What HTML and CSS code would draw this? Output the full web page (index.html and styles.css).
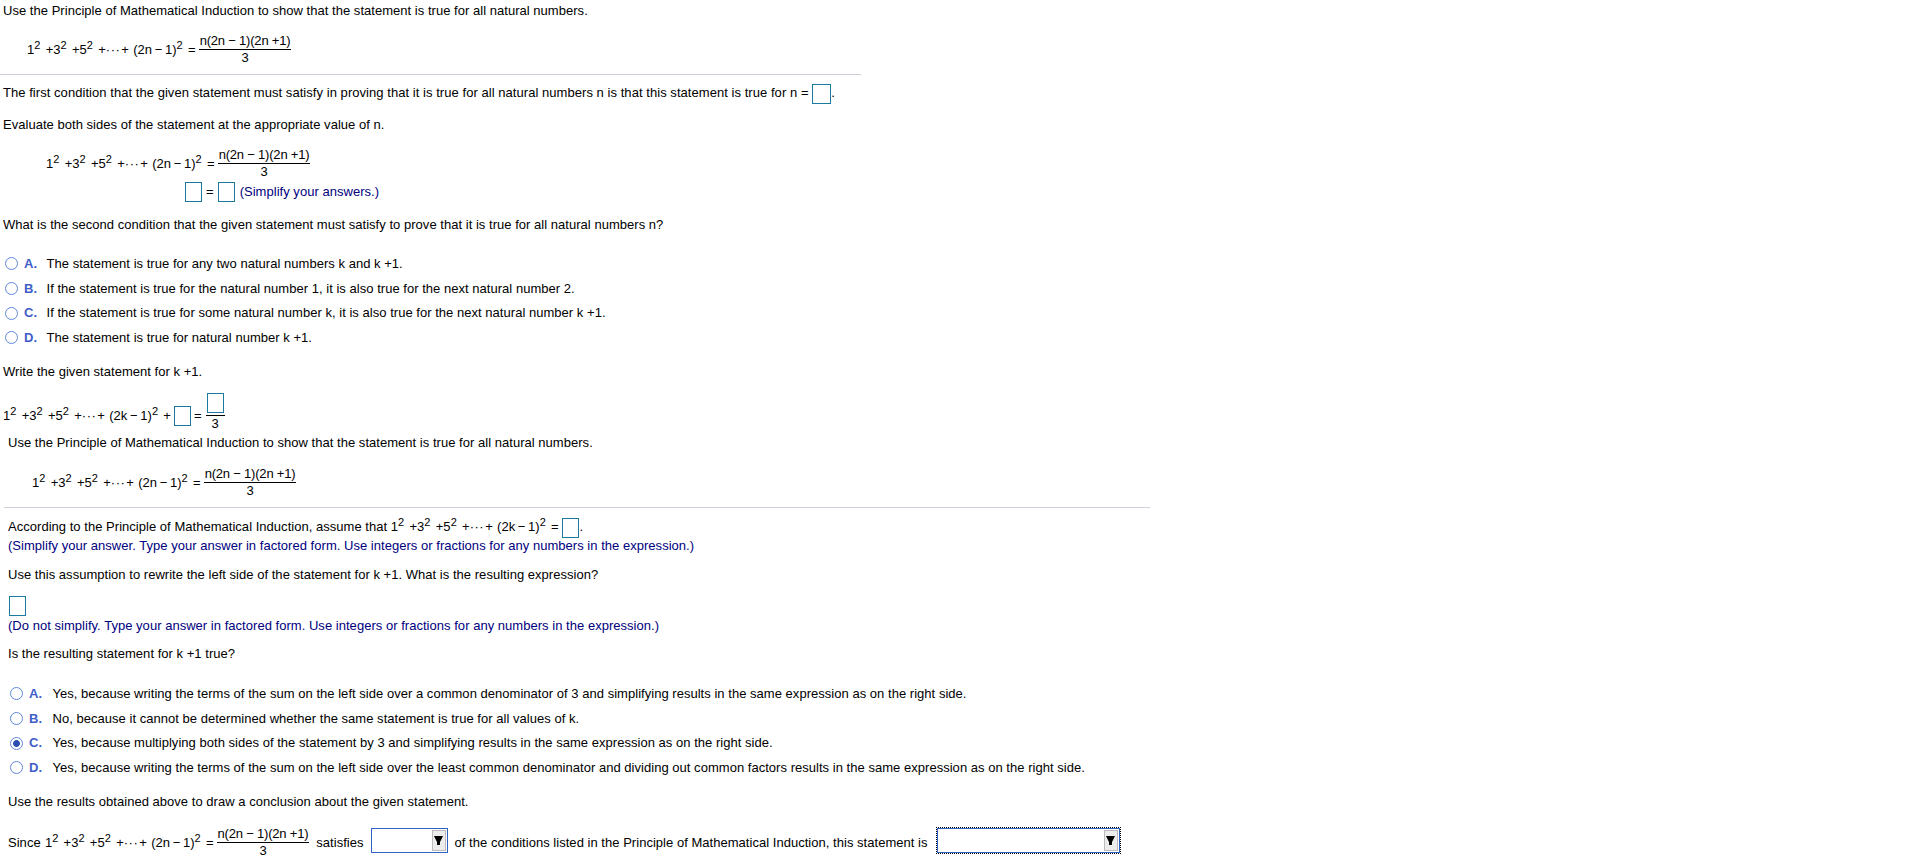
FILE: index.html
```html
<!DOCTYPE html>
<html lang="en">
<head>
    <meta charset="UTF-8">
    <title>Principle of Mathematical Induction</title>
    <link rel="stylesheet" href="styles.css">
</head>
<body>

    <!-- first question -->
    <section class="part part-first">
        <p class="line">Use the Principle of Mathematical Induction to show that the statement is true for all natural numbers.</p>

        <div class="formula indent-first">
            <span class="math">1<sup>2</sup> +3<sup>2</sup> +5<sup>2</sup> +<span class="dots">···</span>+ (2n&thinsp;−&thinsp;1)<sup>2</sup> =</span>
            <span class="frac"><span class="num">n(2n − 1)(2n +1)</span><span class="den">3</span></span>
        </div>
        <hr class="rule rule-first">

        <p class="line line-first-cond">The first condition that the given statement must satisfy in proving that it is true for all natural numbers n is that this statement is true for n = <span class="box box-wide"></span>.</p>
        <p class="line line-eval">Evaluate both sides of the statement at the appropriate value of n.</p>

        <div class="formula indent-eval">
            <span class="math">1<sup>2</sup> +3<sup>2</sup> +5<sup>2</sup> +<span class="dots">···</span>+ (2n&thinsp;−&thinsp;1)<sup>2</sup> =</span>
            <span class="frac"><span class="num">n(2n − 1)(2n +1)</span><span class="den">3</span></span>
        </div>
        <div class="answer-row">
            <span class="box"></span><span>=</span><span class="box"></span><span class="hint">(Simplify your answers.)</span>
        </div>

        <p class="line line-second">What is the second condition that the given statement must satisfy to prove that it is true for all natural numbers n?</p>

        <ul class="choices choices-first">
            <li><span class="radio"></span><b>A.</b><span>The statement is true for any two natural numbers k and k +1.</span></li>
            <li><span class="radio"></span><b>B.</b><span>If the statement is true for the natural number 1, it is also true for the next natural number 2.</span></li>
            <li><span class="radio"></span><b>C.</b><span>If the statement is true for some natural number k, it is also true for the next natural number k +1.</span></li>
            <li><span class="radio"></span><b>D.</b><span>The statement is true for natural number k +1.</span></li>
        </ul>

        <p class="line line-write">Write the given statement for k +1.</p>

        <div class="formula formula-k">
            <span class="math">1<sup>2</sup> +3<sup>2</sup> +5<sup>2</sup> +<span class="dots">···</span>+ (2k&thinsp;−&thinsp;1)<sup>2</sup> +</span>
            <span class="box"></span><span>=</span>
            <span class="frac frac-box"><span class="num"><span class="box"></span></span><span class="den">3</span></span>
        </div>
    </section>

    <!-- second question -->
    <section class="part part-second">
        <p class="line">Use the Principle of Mathematical Induction to show that the statement is true for all natural numbers.</p>

        <div class="formula indent-second">
            <span class="math">1<sup>2</sup> +3<sup>2</sup> +5<sup>2</sup> +<span class="dots">···</span>+ (2n&thinsp;−&thinsp;1)<sup>2</sup> =</span>
            <span class="frac"><span class="num">n(2n − 1)(2n +1)</span><span class="den">3</span></span>
        </div>
        <hr class="rule rule-second">

        <p class="line line-assume">According to the Principle of Mathematical Induction, assume that <span class="math">1<sup>2</sup> +3<sup>2</sup> +5<sup>2</sup> +<span class="dots">···</span>+ (2k&thinsp;−&thinsp;1)<sup>2</sup> =</span> <span class="box"></span>.</p>
        <p class="line line-hint hint">(Simplify your answer. Type your answer in factored form. Use integers or fractions for any numbers in the expression.)</p>

        <p class="line line-rewrite">Use this assumption to rewrite the left side of the statement for k +1. What is the resulting expression?</p>
        <div class="box-row"><span class="box"></span></div>
        <p class="line hint">(Do not simplify. Type your answer in factored form. Use integers or fractions for any numbers in the expression.)</p>

        <p class="line line-true">Is the resulting statement for k +1 true?</p>

        <ul class="choices choices-second">
            <li><span class="radio"></span><b>A.</b><span>Yes, because writing the terms of the sum on the left side over a common denominator of 3 and simplifying results in the same expression as on the right side.</span></li>
            <li><span class="radio"></span><b>B.</b><span>No, because it cannot be determined whether the same statement is true for all values of k.</span></li>
            <li><span class="radio checked"></span><b>C.</b><span>Yes, because multiplying both sides of the statement by 3 and simplifying results in the same expression as on the right side.</span></li>
            <li><span class="radio"></span><b>D.</b><span>Yes, because writing the terms of the sum on the left side over the least common denominator and dividing out common factors results in the same expression as on the right side.</span></li>
        </ul>

        <p class="line line-results">Use the results obtained above to draw a conclusion about the given statement.</p>

        <div class="formula formula-since">
            <span class="math">Since 1<sup>2</sup> +3<sup>2</sup> +5<sup>2</sup> +<span class="dots">···</span>+ (2n&thinsp;−&thinsp;1)<sup>2</sup> =</span>
            <span class="frac"><span class="num">n(2n − 1)(2n +1)</span><span class="den">3</span></span>
            <span class="after-frac">satisfies</span>
            <span class="dropdown dropdown-short"><span class="arrow"><svg width="9" height="11" viewBox="0 0 9 11"><path d="M0 1h9L6 7v3H3V7z" fill="#000"/></svg></span></span>
            <span>of the conditions listed in the Principle of Mathematical Induction, this statement is</span>
            <span class="focus-ring"><span class="dropdown dropdown-long"><span class="arrow"><svg width="9" height="11" viewBox="0 0 9 11"><path d="M0 1h9L6 7v3H3V7z" fill="#000"/></svg></span></span></span>
        </div>
    </section>

</body>
</html>
```

FILE: styles.css
```css
body {
    margin: 0;
    padding-top: 1px;
    background: #fff;
    color: #000;
    font-family: "Liberation Sans", Arial, sans-serif;
    font-size: 13px;
    line-height: 20px;
    letter-spacing: 0.03px;
}

/* Две части задания */
.part-first {
    padding-left: 3px;
}

.part-second {
    margin-top: -6px;
    padding-left: 8px;
}

.line {
    margin: 0;
    height: 20px;
}

sup {
    font-size: 11px;
    line-height: 0;
    vertical-align: 5px;
    margin-right: 1px;
}

.hint {
    color: #000080;
}

/* Формулы */
.math {
    word-spacing: 0.6px;
}

.dots {
    letter-spacing: 0.5px;
    margin: 0 1px 0 0;
}

.formula {
    display: flex;
    align-items: center;
    height: 36px;
    gap: 3px;
}

.frac {
    display: inline-flex;
    flex-direction: column;
    align-items: center;
    line-height: 15px;
    letter-spacing: -0.2px;
}

.frac .num {
    display: block;
    padding: 0 1px 1px;
    border-bottom: 1px solid #000;
}

.frac .den {
    display: block;
    height: 17px;
}

.indent-first {
    margin: 11px 0 0 24px;
}

.indent-eval {
    margin: 11px 0 0 43px;
}

.indent-second {
    margin: 12px 0 0 24px;
}

.rule {
    margin: 0;
    border: none;
    height: 1px;
    background: #cdd1dc;
}

.rule-first {
    width: 861px;
    margin: 6px 0 0 -3px;
}

.rule-second {
    width: 1146px;
    margin: 6px 0 0 -4px;
}

.box {
    display: inline-block;
    width: 17px;
    height: 20px;
    box-sizing: border-box;
    border: 1.5px solid #1b7a9e;
    background: #fff;
    vertical-align: middle;
}

.box-wide {
    width: 19px;
}

.line-first-cond {
    margin-top: 8px;
    letter-spacing: 0.05px;
}

.line-eval {
    margin-top: 12px;
}

.line-second {
    margin-top: 12px;
}

.line-write {
    margin-top: 11.67px;
}

.line-assume {
    margin-top: 9px;
}

.line-hint {
    margin-top: -1px;
}

.line-rewrite {
    margin-top: 9px;
}

.line-true {
    margin-top: 8px;
}

.line-results {
    margin-top: 11.67px;
}

.answer-row {
    display: flex;
    align-items: center;
    gap: 4px;
    margin: -1px 0 0 182px;
    height: 22px;
}

.answer-row .hint {
    margin-left: 1px;
}

/* Варианты ответа */
.choices {
    list-style: none;
    margin: 0;
    padding: 0;
}

.choices li {
    display: flex;
    align-items: center;
    height: 24.67px;
}

.choices b {
    width: 22.5px;
    margin-left: 6px;
    color: #3f5ec8;
}

.choices-first {
    margin: 16.67px 0 0 2px;
}

.choices-second {
    margin: 17.67px 0 0 2px;
}

.choices-second b {
    width: 23.5px;
}

.radio {
    flex: none;
    width: 13px;
    height: 13px;
    box-sizing: border-box;
    border: 1.5px solid #5f88db;
    border-radius: 50%;
    background: #fff;
}

.radio.checked {
    background: radial-gradient(circle, #2a4fb0 0, #2a4fb0 3px, #fff 3.8px);
}

.formula-k {
    height: 46px;
    margin-top: 11px;
}

.formula-k .frac {
    align-self: flex-start;
    margin-left: 1px;
}

.frac-box .num {
    padding: 0 1px 2px;
    line-height: 0;
}

.box-row {
    display: flex;
    height: 20px;
    margin-top: 11px;
    margin-left: 1px;
}

/* Выпадающие списки */
.formula-since {
    margin-top: 11px;
    height: 40px;
}

.after-frac {
    margin-left: 4px;
}

.dropdown {
    display: flex;
    justify-content: flex-end;
    align-items: center;
    height: 25px;
    box-sizing: border-box;
    border: 1px solid #2f62c0;
    background: #fff;
    padding-right: 1px;
}

.dropdown-short {
    width: 77px;
    margin: 0 4px 5px;
}

.dropdown-long {
    width: 183px;
}

.focus-ring {
    display: block;
    margin: 0 0 5px 5px;
    border: 1px dotted #000;
}

.arrow {
    display: flex;
    justify-content: center;
    align-items: center;
    width: 14px;
    height: 21px;
    background: #ececec;
    border: 1px solid #bbb;
    box-sizing: border-box;
}
```
